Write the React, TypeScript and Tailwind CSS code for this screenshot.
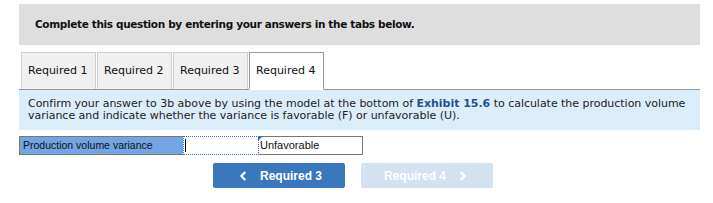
import { ChevronLeft, ChevronRight } from 'lucide-react';

const tabs = ['Required 1', 'Required 2', 'Required 3', 'Required 4'];

export default function App() {
  return (
    <div className="w-[713px] h-[203px] bg-white pt-1 pl-[19px] pr-[13px] font-['DejaVu_Sans',sans-serif] text-[#111]">
      {/* Instructions */}
      <div className="h-[41px] bg-[#dedede] flex items-center pl-4 text-[10.5px] font-bold tracking-[-0.35px]">
        Complete this question by entering your answers in the tabs below.
      </div>

      {/* Tabs */}
      <div className="mt-[7px] flex items-end pl-[2px] border-b border-[#999] h-[38px]">
        {tabs.map((t, i) => {
          const active = i === 3;
          return (
            <div
              key={t}
              className={
                active
                  ? 'w-[75px] h-[38px] -mb-px bg-white border border-[#999] border-b-white flex items-center pl-[6px] text-[11px]'
                  : 'w-[75px] h-[37px] mr-px bg-[#f0f0f0] border border-[#cfcfcf] border-b-0 flex items-center pl-[6px] text-[11px]'
              }
            >
              {t}
            </div>
          );
        })}
      </div>

      {/* Question */}
      <div className="h-[40px] bg-[#dcedfa] pl-[9px] pt-[8px] text-[11px] leading-[12px] tracking-[-0.03px] whitespace-nowrap text-[#222]">
        Confirm your answer to 3b above by using the model at the bottom of{' '}
        <span className="font-bold text-[#24528d]">Exhibit 15.6</span> to calculate the production volume
        <br />
        variance and indicate whether the variance is favorable (F) or unfavorable (U).
      </div>

      {/* Answer row */}
      <div className="mt-[6px] flex h-[19px] font-['Liberation_Sans',sans-serif] text-[11px]">
        <div className="w-[164px] bg-[#72a5e4] border border-[#777] border-r-0 flex items-center pl-[3px] text-[10.5px] text-[#111]">
          Production volume variance
        </div>
        <div className="w-[76px] bg-white border border-dotted border-[#3a6fc0] flex items-center">
          <div className="w-px h-[13px] bg-black ml-[1px]" />
        </div>
        <div className="relative w-[104px] bg-white border border-[#777] border-l-0 flex items-center pl-[1px]">
          <span className="absolute -left-px -top-px w-0 h-0 border-l-[5px] border-l-[#3a6fc0] border-b-[5px] border-b-transparent" />
          Unfavorable
        </div>
      </div>

      {/* Nav buttons */}
      <div className="mt-[8px] flex pl-[194px] gap-4 font-['Liberation_Sans',sans-serif] text-[12px] font-bold">
        <div className="w-[132px] h-[25px] bg-[#3a77bd] rounded-[2px] flex items-center justify-center gap-[10px] text-white">
          <ChevronLeft size={14} strokeWidth={3.5} />
          <span>Required 3</span>
        </div>
        <div className="w-[132px] h-[25px] bg-[#d4e1ef] rounded-[2px] flex items-center justify-center gap-[10px] text-white">
          <span>Required 4</span>
          <ChevronRight size={14} strokeWidth={3.5} />
        </div>
      </div>
    </div>
  );
}
